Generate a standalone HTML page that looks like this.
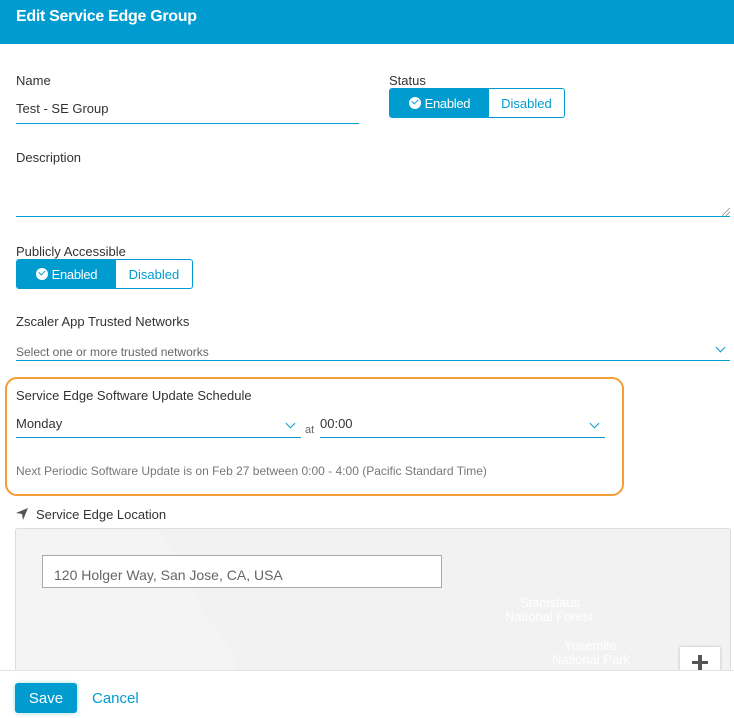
<!DOCTYPE html>
<html><head><style>
*{margin:0;padding:0;box-sizing:border-box}
body{width:734px;height:718px;overflow:hidden;background:#fff;font-family:"Liberation Sans",sans-serif;color:#333;position:relative}
.a{position:absolute;white-space:nowrap}
.lbl{font-size:13px;color:#333}
.ul{position:absolute;height:1px;background:#0a9bd0}
.tog{position:absolute;height:30px;border:1px solid #009cd0;border-radius:3px;display:flex;font-size:13px;overflow:hidden}
.tog .on{background:#009cd0;color:#fff;display:flex;align-items:center;justify-content:center;gap:4px;letter-spacing:-0.3px}
.tog .off{color:#009cd0;display:flex;align-items:center;justify-content:center}
.chk{width:12px;height:12px;border-radius:50%;background:#fff;position:relative}
.chk:after{content:"";position:absolute;left:3px;top:2px;width:5px;height:3px;border-left:1.5px solid #009cd0;border-bottom:1.5px solid #009cd0;transform:rotate(-45deg)}
.chev{position:absolute;width:7px;height:7px;border-right:1.3px solid #0a9bd0;border-bottom:1.3px solid #0a9bd0;transform:rotate(45deg)}
</style></head><body>
<div class="a" style="left:0;top:0;width:734px;height:44px;background:#009cd0"></div>
<div class="a" style="left:16px;top:8px;color:#fff;font-size:16px;font-weight:bold;letter-spacing:-0.3px">Edit Service Edge Group</div>

<div class="a lbl" style="left:16px;top:73px">Name</div>
<div class="a" style="left:16px;top:101px;font-size:13px">Test - SE Group</div>
<div class="ul" style="left:16px;top:123px;width:343px"></div>

<div class="a lbl" style="left:389px;top:73px">Status</div>
<div class="tog" style="left:389px;top:88px;width:176px"><div class="on" style="width:100px"><span class="chk"></span>Enabled</div><div class="off" style="width:76px">Disabled</div></div>

<div class="a lbl" style="left:16px;top:150px">Description</div>
<div class="ul" style="left:16px;top:216px;width:714px"></div>
<div class="a" style="left:722px;top:208px;width:8px;height:8px;background:linear-gradient(135deg,transparent 45%,#888 46%,#888 52%,transparent 53%,transparent 70%,#888 71%,#888 77%,transparent 78%)"></div>

<div class="a lbl" style="left:16px;top:244px">Publicly Accessible</div>
<div class="tog" style="left:16px;top:259px;width:177px"><div class="on" style="width:100px"><span class="chk"></span>Enabled</div><div class="off" style="width:77px">Disabled</div></div>

<div class="a lbl" style="left:16px;top:314px">Zscaler App Trusted Networks</div>
<div class="a" style="left:16px;top:345px;font-size:12px;color:#666">Select one or more trusted networks</div>
<div class="ul" style="left:16px;top:360px;width:714px"></div>
<div class="chev" style="left:717px;top:344px"></div>

<div class="a" style="left:5px;top:377px;width:619px;height:119px;border:2px solid #f59c35;border-radius:12px"></div>
<div class="a lbl" style="left:16px;top:388px">Service Edge Software Update Schedule</div>
<div class="a" style="left:16px;top:416px;font-size:13px">Monday</div>
<div class="ul" style="left:16px;top:437px;width:285px"></div>
<div class="chev" style="left:287px;top:420px"></div>
<div class="a" style="left:305px;top:424px;font-size:11px;color:#666">at</div>
<div class="a" style="left:320px;top:416px;font-size:13px">00:00</div>
<div class="ul" style="left:320px;top:437px;width:285px"></div>
<div class="chev" style="left:591px;top:420px"></div>
<div class="a" style="left:16px;top:464px;font-size:12px;color:#777">Next Periodic Software Update is on Feb 27 between 0:00 - 4:00 (Pacific Standard Time)</div>

<svg class="a" style="left:15px;top:507px" width="14" height="14" viewBox="0 0 14 14"><path d="M13 1 L1 6 L7 7 L8 13 Z" fill="#555"/></svg>
<div class="a lbl" style="left:36px;top:507px">Service Edge Location</div>

<div class="a" style="left:15px;top:528px;width:716px;height:160px;border:1px solid #ddd;border-radius:3px;background:#f2f2f2;overflow:hidden">
<svg width="716" height="160" style="position:absolute;left:0;top:0"><path d="M0 0 L140 0 L175 45 L185 80 L200 100 L215 120 L225 160 L0 160 Z" fill="#f4f4f4"/></svg>
<div class="a" style="left:504px;top:66px;color:#fff;font-size:13px">Stanislaus</div>
<div class="a" style="left:489px;top:80px;color:#fff;font-size:13px">National Forest</div>
<div class="a" style="left:548px;top:109px;color:#fff;font-size:13px">Yosemite</div>
<div class="a" style="left:536px;top:123px;color:#fff;font-size:13px">National Park</div>
<div class="a" style="left:26px;top:26px;width:400px;height:33px;background:#fff;border:1px solid #aaa"></div>
<div class="a" style="left:38px;top:38px;font-size:14px;color:#666">120 Holger Way, San Jose, CA, USA</div>
<div class="a" style="left:664px;top:118px;width:40px;height:40px;background:#fff;box-shadow:0 0 3px #bbb"></div>
<div class="a" style="left:676px;top:132px;width:16px;height:3px;background:#555"></div>
<div class="a" style="left:682px;top:126px;width:4px;height:20px;background:#555"></div>
</div>

<div class="a" style="left:0;top:670px;width:734px;height:48px;background:#fff;border-top:1px solid #e4e4e4"></div>
<div class="a" style="left:15px;top:683px;width:62px;height:30px;background:#009cd0;border-radius:3px;color:#fff;font-size:15px;text-align:center;line-height:32px;box-shadow:0 0 4px #9dd">Save</div>
<div class="a" style="left:92px;top:690px;color:#009cd0;font-size:15px">Cancel</div>
</body></html>
